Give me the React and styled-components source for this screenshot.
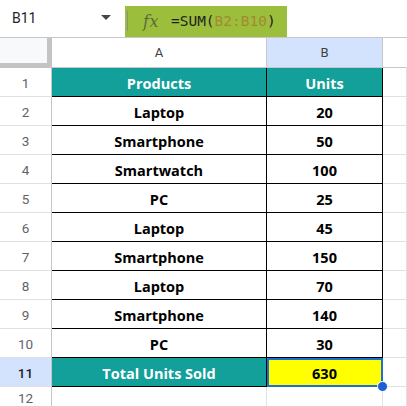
import React from "react";
import styled, { createGlobalStyle } from "styled-components";

const GlobalStyle = createGlobalStyle`
  * { box-sizing: border-box; }
  body {
    margin: 0;
    background: #ffffff;
    font-family: Roboto, "Liberation Sans", sans-serif;
  }
`;

const rows = [
  { n: 2, product: "Laptop", units: 20 },
  { n: 3, product: "Smartphone", units: 50 },
  { n: 4, product: "Smartwatch", units: 100 },
  { n: 5, product: "PC", units: 25 },
  { n: 6, product: "Laptop", units: 45 },
  { n: 7, product: "Smartphone", units: 150 },
  { n: 8, product: "Laptop", units: 70 },
  { n: 9, product: "Smartphone", units: 140 },
  { n: 10, product: "PC", units: 30 },
];

function App() {
  return (
    <Page>
      <GlobalStyle />
      <Toolbar>
        <NameBox>
          <span>B11</span>
          <Caret />
        </NameBox>
        <FormulaBox>
          <Divider />
          <Fx>fx</Fx>
          <Formula>
            =SUM(<Ref>B2:B10</Ref>)
          </Formula>
        </FormulaBox>
      </Toolbar>

      <Grid>
        <Corner />
        <ColHead>A</ColHead>
        <ColHead $active>B</ColHead>
        <ColHead $blank />

        <RowHead>1</RowHead>
        <Cell $table $bg="#13a09a" $color="#ffffff">Products</Cell>
        <Cell $table $bg="#13a09a" $color="#ffffff">Units</Cell>
        <Cell />

        {rows.map((r) => (
          <React.Fragment key={r.n}>
            <RowHead>{r.n}</RowHead>
            <Cell $table>{r.product}</Cell>
            <Cell $table>{r.units}</Cell>
            <Cell />
          </React.Fragment>
        ))}

        <RowHead $active>11</RowHead>
        <Cell $table $bg="#13a09a" $color="#ffffff">Total Units Sold</Cell>
        <Selected>
          630
          <Handle />
        </Selected>
        <Cell />

        <RowHead>12</RowHead>
        <Cell />
        <Cell />
        <Cell />
      </Grid>
    </Page>
  );
}

export default App;

const Page = styled.div`
  width: 407px;
  height: 406px;
  overflow: hidden;
  background: #ffffff;
`;

const Toolbar = styled.div`
  height: 38px;
  display: flex;
  align-items: stretch;
  border-bottom: 1px solid #c7c7c7;
`;

const NameBox = styled.div`
  width: 125px;
  display: flex;
  align-items: center;
  justify-content: space-between;
  padding: 0 14px 2px 12px;
  font-size: 14px;
  color: #1f1f1f;
`;

const Caret = styled.div`
  width: 0;
  height: 0;
  border-left: 5px solid transparent;
  border-right: 5px solid transparent;
  border-top: 5px solid #444746;
`;

const FormulaBox = styled.div`
  margin-top: 6px;
  width: 162px;
  background: #9cbe3d;
  display: flex;
  align-items: center;
  padding-bottom: 1px;
`;

const Divider = styled.div`
  width: 1px;
  height: 20px;
  background: #8a8f86;
  margin-left: 2px;
`;

const Fx = styled.span`
  font-family: "DejaVu Serif", "Liberation Serif", serif;
  font-style: italic;
  font-size: 16px;
  color: #5a6b37;
  margin-left: 15px;
  letter-spacing: 0.5px;
`;

const Formula = styled.span`
  font-family: "DejaVu Sans Mono", "Liberation Mono", monospace;
  font-size: 14.5px;
  color: #1f1f1f;
  margin-left: 12px;
`;

const Ref = styled.span`
  color: #a38a2f;
`;

const Grid = styled.div`
  display: grid;
  grid-template-columns: 52px 215px 116px 1fr;
  grid-template-rows: 30px repeat(11, 29px) 22px;
`;

const Corner = styled.div`
  background: #f8f9fa;
  border-right: 5px solid #c4c4c4;
  border-bottom: 5px solid #c4c4c4;
`;

const ColHead = styled.div`
  display: flex;
  align-items: center;
  justify-content: center;
  font-size: 13px;
  color: #3c4043;
  background: ${(p) => (p.$active ? "#d3e3fd" : "#ffffff")};
  border-right: 1px solid ${(p) => (p.$blank ? "#ffffff" : "#c7c7c7")};
  border-bottom: 1px solid #c7c7c7;
`;

const RowHead = styled.div`
  display: flex;
  align-items: center;
  justify-content: center;
  font-size: 13.5px;
  padding-top: 1px;
  color: ${(p) => (p.$active ? "#1f1f1f" : "#5f6368")};
  font-weight: ${(p) => (p.$active ? 500 : 400)};
  background: ${(p) => (p.$active ? "#d3e3fd" : "#ffffff")};
  border-right: 1px solid #c7c7c7;
  border-bottom: 1px solid #e1e1e1;
`;

const Cell = styled.div`
  display: flex;
  align-items: center;
  justify-content: center;
  padding-top: 2px;
  font-family: "Open Sans", Lato, sans-serif;
  font-weight: 700;
  font-size: 14.5px;
  color: ${(p) => p.$color || "#000000"};
  background: ${(p) => p.$bg || "#ffffff"};
  border-right: 1px solid ${(p) => (p.$table ? "#000000" : "#e1e1e1")};
  border-bottom: 1px solid ${(p) => (p.$table ? "#000000" : "#e1e1e1")};
`;

const Selected = styled(Cell)`
  position: relative;
  background: #ffff00;
  outline: 2px solid #1a6fd8;
  outline-offset: -2px;
  z-index: 1;
`;

const Handle = styled.div`
  position: absolute;
  right: -6px;
  bottom: -6px;
  width: 11px;
  height: 11px;
  border-radius: 50%;
  background: #1a5fd6;
  border: 1px solid #ffffff;
`;
